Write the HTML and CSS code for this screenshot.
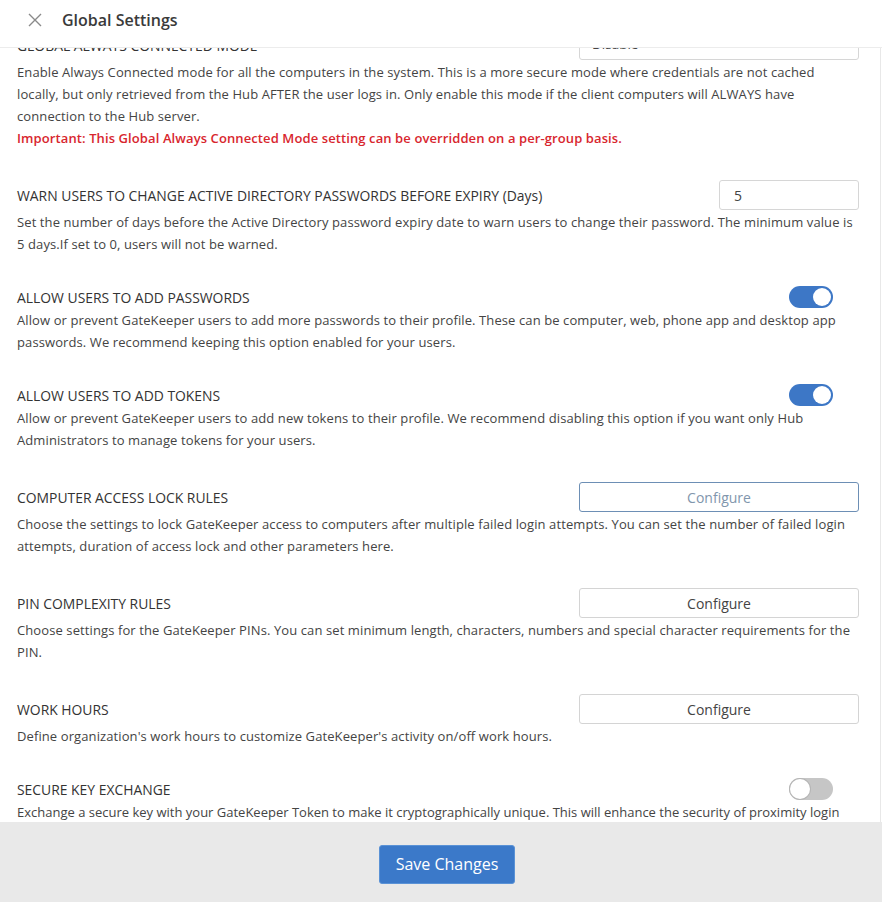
FILE: index.html
```html
<!DOCTYPE html>
<html lang="en">

<head>
    <meta charset="UTF-8">
    <meta name="viewport" content="width=device-width, initial-scale=1.0">
    <title>Global Settings</title>
    <link rel="stylesheet" href="styles.css">
</head>

<body>

    <div class="modal">
        <div class="modal__header">
            <button class="modal__close" aria-label="Close">
                <svg width="14" height="14" viewBox="0 0 14 14">
                    <path d="M1 1 L13 13 M13 1 L1 13" stroke="#8a8a8a" stroke-width="1.4" fill="none" />
                </svg>
            </button>
            <h2 class="modal__title">Global Settings</h2>
        </div>

        <div class="modal__body">
            <div class="settings">

                <div class="setting">
                    <div class="setting__head">
                        <span class="setting__name">GLOBAL ALWAYS CONNECTED MODE</span>
                        <div class="select">Disable</div>
                    </div>
                    <p class="setting__desc">Enable Always Connected mode for all the computers in the system. This is a more secure mode where credentials are not cached locally, but only retrieved from the Hub AFTER the user logs in. Only enable this mode if the client computers will ALWAYS have connection to the Hub server.</p>
                    <p class="setting__desc setting__desc--warn">Important: This Global Always Connected Mode setting can be overridden on a per-group basis.</p>
                </div>

                <div class="setting">
                    <div class="setting__head">
                        <span class="setting__name">WARN USERS TO CHANGE ACTIVE DIRECTORY PASSWORDS BEFORE EXPIRY (Days)</span>
                        <input class="field" type="text" value="5">
                    </div>
                    <p class="setting__desc">Set the number of days before the Active Directory password expiry date to warn users to change their password. The minimum value is 5 days.If set to 0, users will not be warned.</p>
                </div>

                <div class="setting">
                    <div class="setting__head setting__head--toggle">
                        <span class="setting__name">ALLOW USERS TO ADD PASSWORDS</span>
                        <span class="toggle toggle--on"></span>
                    </div>
                    <p class="setting__desc">Allow or prevent GateKeeper users to add more passwords to their profile. These can be computer, web, phone app and desktop app passwords. We recommend keeping this option enabled for your users.</p>
                </div>

                <div class="setting">
                    <div class="setting__head setting__head--toggle">
                        <span class="setting__name">ALLOW USERS TO ADD TOKENS</span>
                        <span class="toggle toggle--on"></span>
                    </div>
                    <p class="setting__desc">Allow or prevent GateKeeper users to add new tokens to their profile. We recommend disabling this option if you want only Hub Administrators to manage tokens for your users.</p>
                </div>

                <div class="setting">
                    <div class="setting__head">
                        <span class="setting__name">COMPUTER ACCESS LOCK RULES</span>
                        <button class="config-btn config-btn--focus">Configure</button>
                    </div>
                    <p class="setting__desc">Choose the settings to lock GateKeeper access to computers after multiple failed login attempts. You can set the number of failed login attempts, duration of access lock and other parameters here.</p>
                </div>

                <div class="setting">
                    <div class="setting__head">
                        <span class="setting__name">PIN COMPLEXITY RULES</span>
                        <button class="config-btn">Configure</button>
                    </div>
                    <p class="setting__desc">Choose settings for the GateKeeper PINs. You can set minimum length, characters, numbers and special character requirements for the PIN.</p>
                </div>

                <div class="setting">
                    <div class="setting__head">
                        <span class="setting__name">WORK HOURS</span>
                        <button class="config-btn">Configure</button>
                    </div>
                    <p class="setting__desc">Define organization's work hours to customize GateKeeper's activity on/off work hours.</p>
                </div>

                <div class="setting">
                    <div class="setting__head setting__head--toggle">
                        <span class="setting__name">SECURE KEY EXCHANGE</span>
                        <span class="toggle"></span>
                    </div>
                    <p class="setting__desc setting__desc--tight">Exchange a secure key with your GateKeeper Token to make it cryptographically unique. This will enhance the security of proximity login and make it harder to clone your token.</p>
                </div>

            </div>
        </div>

        <div class="modal__footer">
            <button class="save-btn">Save Changes</button>
        </div>
    </div>

</body>

</html>
```

FILE: styles.css
```css
html {
    box-sizing: border-box;
    background: #fff;
}

*,
*:before,
*:after {
    box-sizing: inherit;
}

body {
    margin: 0;
    font-family: 'Segoe UI', 'Open Sans', sans-serif;
    color: #3c3c3c;
}

.modal {
    display: flex;
    flex-direction: column;
    width: 882px;
    height: 902px;
}

.modal__header {
    display: flex;
    align-items: center;
    height: 48px;
    padding: 0 0 7px 28px;
    border-bottom: 1px solid #ececec;
    flex-shrink: 0;
}

.modal__close {
    display: flex;
    background: none;
    border: 0;
    padding: 0;
    margin: 0 20px 0 0;
    cursor: pointer;
}

.modal__title {
    margin: 0;
    font-size: 16px;
    font-weight: 600;
    color: #3a3a3a;
}

.modal__body {
    flex: 1;
    overflow: hidden;
    width: 881px;
    border-right: 1px solid #e8e8e8;
}

.settings {
    margin-top: -33px;
    padding: 0 21px 0 17px;
}

.setting {
    padding: 15px 0 16px;
}

.setting__head {
    display: flex;
    align-items: center;
    justify-content: space-between;
    min-height: 30px;
    margin-bottom: 1px;
}

.setting__head--toggle {
    min-height: 22px;
}

.setting__name {
    font-size: 13.9px;
    color: #333;
}

.setting__desc {
    margin: 0;
    font-size: 13px;
    letter-spacing: 0.1px;
    line-height: 22px;
    color: #444;
}

.setting__desc--tight {
    letter-spacing: 0;
}

.setting__desc--warn {
    color: #d8262e;
    font-weight: 600;
    letter-spacing: 0.1px;
}

.select {
    width: 280px;
    height: 30px;
    border: 1px solid #d6d6d6;
    border-radius: 3px;
    padding: 4px 12px;
    font-size: 13.5px;
    color: #444;
}

.field {
    width: 140px;
    height: 30px;
    border: 1px solid #d6d6d6;
    border-radius: 3px;
    padding: 0 14px;
    font-family: inherit;
    font-size: 14px;
    color: #444;
}

.config-btn {
    width: 280px;
    height: 30px;
    background: #fff;
    border: 1px solid #d4d4d4;
    border-radius: 3px;
    font-family: inherit;
    font-size: 14px;
    color: #444;
    cursor: pointer;
}

.config-btn--focus {
    border-color: #6d8fb5;
    color: #8196ad;
}

.toggle {
    position: relative;
    width: 44px;
    height: 22px;
    margin-right: 26px;
    border-radius: 11px;
    background: #c6c6c6;
}

.toggle:after {
    content: '';
    position: absolute;
    top: 1px;
    left: 1px;
    width: 20px;
    height: 20px;
    border-radius: 50%;
    background: #fff;
    box-shadow: 0 0 0 1px #b5b5b5;
}

.toggle--on {
    background: #3d77c6;
}

.toggle--on:after {
    top: 2px;
    left: 24px;
    width: 18px;
    height: 18px;
    box-shadow: none;
}

.modal__footer {
    display: flex;
    align-items: center;
    justify-content: center;
    height: 80px;
    padding: 4px 0 0 12px;
    flex-shrink: 0;
    background: #e9e9e9;
}

.save-btn {
    width: 136px;
    height: 39px;
    background: #3b79c9;
    border: 1px solid #5a92d6;
    border-radius: 3px;
    color: #fff;
    font-family: inherit;
    font-size: 16px;
    cursor: pointer;
}
```
